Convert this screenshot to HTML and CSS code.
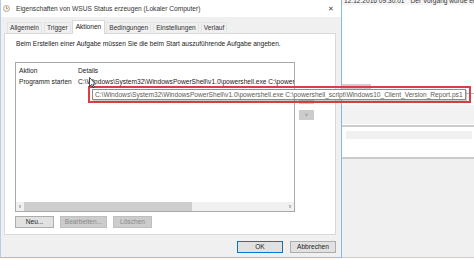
FILE: index.html
```html
<!DOCTYPE html>
<html lang="de">
<head>
  <meta charset="UTF-8">
  <title>Eigenschaften von WSUS Status erzeugen</title>
  <link rel="stylesheet" href="styles.css">
</head>
<body>
  <!-- Dialog -->
  <div class="dialog">
    <div class="titlebar">
      <svg class="app-icon" width="7" height="7" viewBox="0 0 7 7">
        <circle cx="3.5" cy="3.5" r="3" fill="#f4f1e8" stroke="#9a9a9a" stroke-width="0.8"/>
        <path d="M3.5 1.6 V3.6 H5" fill="none" stroke="#c08a2a" stroke-width="0.8"/>
      </svg>
      <span class="title">Eigenschaften von WSUS Status erzeugen (Lokaler Computer)</span>
      <span class="close">&#x2715;</span>
    </div>

    <div class="dialog-body">
      <div class="tabs">
        <span class="tab">Allgemein</span>
        <span class="tab">Trigger</span>
        <span class="tab active">Aktionen</span>
        <span class="tab">Bedingungen</span>
        <span class="tab">Einstellungen</span>
        <span class="tab">Verlauf</span>
      </div>

      <div class="panel">
        <p class="hint">Beim Erstellen einer Aufgabe müssen Sie die beim Start auszuführende Aufgabe angeben.</p>

        <div class="list-area">
          <div class="listview">
            <div class="list-rows">
              <div class="list-row list-head">
                <span class="col-action">Aktion</span>
                <span class="col-details">Details</span>
              </div>
              <div class="list-row">
                <span class="col-action">Programm starten</span>
                <span class="col-details">C:\Windows\System32\WindowsPowerShell\v1.0\powershell.exe C:\powershell_script\Windows10_Client_Version_Report.ps1</span>
              </div>
            </div>
            <div class="hscroll">
              <span class="arrow">&lsaquo;</span>
              <div class="track"><div class="thumb"></div></div>
              <span class="arrow">&rsaquo;</span>
            </div>
          </div>

          <div class="order-buttons">
            <span class="order-btn">&#x2C4;</span>
            <span class="order-btn">&#x2C5;</span>
          </div>
        </div>

        <div class="action-buttons">
          <span class="btn">Neu...</span>
          <span class="btn disabled">Bearbeiten...</span>
          <span class="btn disabled">Löschen</span>
        </div>
      </div>

      <div class="footer">
        <span class="btn default">OK</span>
        <span class="btn">Abbrechen</span>
      </div>
    </div>

    <!-- Tooltip with full command line, marked in red -->
    <div class="highlight">
      <div class="tooltip">C:\Windows\System32\WindowsPowerShell\v1.0\powershell.exe C:\powershell_script\Windows10_Client_Version_Report.ps1</div>
    </div>

    <svg class="cursor" width="8" height="12" viewBox="0 0 8 12">
      <path d="M0.5 0.5 V9.5 L2.6 7.6 L4 10.8 L5.3 10.2 L3.9 7.1 H6.6 Z" fill="#fff" stroke="#222" stroke-width="0.8"/>
    </svg>
  </div>

  <!-- Task scheduler window behind -->
  <div class="side">
    <div class="side-row top">
      <span class="side-text">12.12.2016 09:30:01</span>
      <span class="side-text">Der Vorgang wurde erfolgreich beendet.</span>
    </div>
    <div class="side-list">
      <div class="side-header"></div>
      <div class="side-rule"></div>
      <div class="side-band"></div>
    </div>
    <div class="side-line"></div>
    <div class="side-sub">
      <div class="side-band small"></div>
    </div>
    <div class="side-footer"></div>
  </div>
</body>
</html>
```

FILE: styles.css
```css
/* General */
body {
  margin: 0;
  width: 474px;
  height: 259px;
  overflow: hidden;
  display: flex;
  background-color: #fdfcf6;
  font-family: "Liberation Sans", Arial, sans-serif;
  font-size: 6.6px;
  color: #222;
}

/* Dialog window */
.dialog {
  position: relative;
  flex: none;
  width: 342px;
  height: 258px;
  display: flex;
  flex-direction: column;
  border-right: 1px solid #8db5e0;
  border-bottom: 1px solid #9dbde2;
  border-left: 1px solid #b7cde8;
  box-sizing: border-box;
}

.titlebar {
  height: 17px;
  flex: none;
  background-color: #ffffff;
  display: flex;
  align-items: center;
  padding: 0 7px 0 2px;
}

.app-icon {
  margin-right: 6px;
}

.title {
  flex: 1;
  color: #333;
}

.close {
  font-size: 7px;
  color: #444;
}

.dialog-body {
  flex: 1;
  background-color: #f0f0f0;
  padding: 4px 5px 0 3px;
  display: flex;
  flex-direction: column;
}

/* Tabs */
.tabs {
  display: flex;
  align-items: flex-end;
  height: 12px;
  padding-left: 3px;
  position: relative;
  z-index: 1;
}

.tab {
  height: 10px;
  line-height: 10px;
  padding: 0 2px;
  margin-right: 2px;
  border: 1px solid #e3e3e3;
  border-bottom: none;
  color: #333;
  background-color: #f0f0f0;
}

.tab.active {
  height: 13px;
  line-height: 11px;
  margin: 0 1px -1px -1px;
  padding: 0 3px;
  background-color: #ffffff;
  border-color: #d9d9d9;
  color: #222;
}

.panel {
  height: 200px;
  background-color: #ffffff;
  border: 1px solid #d9d9d9;
  display: flex;
  flex-direction: column;
}

.hint {
  margin: 6px 0 0 11px;
  line-height: 8px;
}

/* List view */
.list-area {
  display: flex;
  margin: 14px 0 0 10px;
}

.listview {
  width: 278px;
  height: 148px;
  border: 1px solid #a9a9a9;
  display: flex;
  flex-direction: column;
  overflow: hidden;
}

.list-rows {
  flex: 1;
  padding-top: 2px;
}

.list-row {
  display: flex;
  height: 11px;
  line-height: 11px;
  white-space: nowrap;
}

.col-action {
  width: 62px;
  flex: none;
  padding-left: 3px;
  box-sizing: border-box;
}

.col-details {
  flex: none;
}

.hscroll {
  height: 9px;
  display: flex;
  align-items: center;
  background-color: #f0f0f0;
}

.hscroll .arrow {
  width: 8px;
  text-align: center;
  font-size: 7px;
  color: #555;
}

.track {
  flex: 1;
  height: 9px;
}

.thumb {
  width: 168px;
  height: 9px;
  background-color: #cdcdcd;
}

.order-buttons {
  display: flex;
  flex-direction: column;
  gap: 6px;
  margin: 32px 0 0 4px;
}

.order-btn {
  width: 15px;
  height: 10px;
  line-height: 10px;
  text-align: center;
  font-size: 6px;
  color: #777;
  background-color: #cccccc;
}

/* Buttons */
.action-buttons {
  display: flex;
  gap: 6px;
  margin: 4px 0 0 10px;
}

.btn {
  width: 39px;
  height: 12px;
  line-height: 10px;
  text-align: center;
  background-color: #e1e1e1;
  border: 1px solid #adadad;
  box-sizing: border-box;
  color: #222;
}

.action-buttons .btn:nth-child(2) {
  width: 47px;
}

.btn.disabled {
  background-color: #cccccc;
  border-color: #bfbfbf;
  color: #8a8a8a;
}

.footer {
  display: flex;
  justify-content: flex-end;
  gap: 7px;
  padding: 6px 0 0 0;
}

.footer .btn {
  width: 46px;
}

.btn.default {
  border: 1px solid #0078d7;
}

/* Overlays */
.highlight {
  position: absolute;
  left: 87px;
  top: 86px;
  width: 374px;
  height: 13px;
  border: 2px solid #de3b42;
  z-index: 5;
  display: flex;
  align-items: center;
  padding: 0 3px 0 2px;
}

.tooltip {
  flex: 1;
  height: 11px;
  line-height: 10px;
  background-color: #ffffff;
  border: 1px solid #8c8c8c;
  box-shadow: 1px 1px 1px rgba(0, 0, 0, 0.2);
  padding-left: 2px;
  color: #5a5a5a;
  white-space: nowrap;
  overflow: hidden;
  box-sizing: border-box;
}

.cursor {
  position: absolute;
  left: 88px;
  top: 77px;
  z-index: 6;
}

/* Background window */
.side {
  flex: 1;
  min-width: 0;
  overflow: hidden;
  height: 258px;
  display: flex;
  flex-direction: column;
  background-color: #ffffff;
  border-bottom: 1px solid #cfcfcf;
  box-sizing: border-box;
}

.side-row.top {
  height: 5px;
  overflow: hidden;
  display: flex;
  gap: 6px;
  padding-left: 2px;
  background-color: #f4f4f4;
}

.side-text {
  line-height: 7px;
  margin-top: -3px;
  white-space: nowrap;
  color: #333;
}

.side-list {
  height: 120px;
  display: flex;
  flex-direction: column;
}

.side-header {
  width: 29px;
  height: 5px;
  margin-top: 79px;
  background-color: #cfcfcf;
}

.side-rule {
  height: 1px;
  margin-top: 4px;
  background-color: #bdbdbd;
}

.side-band {
  height: 19px;
  margin-top: 11px;
  background-color: #f2f2f2;
}

.side-line {
  height: 2px;
  background-color: #cccccc;
}

.side-sub {
  height: 26px;
  padding: 4px 2px 0 4px;
}

.side-band.small {
  height: 8px;
  margin-top: 0;
  background-color: #f0f0f0;
}

.side-footer {
  flex: 1;
  background-color: #f0f0f0;
  border-top: 2px solid #cccccc;
}
```
